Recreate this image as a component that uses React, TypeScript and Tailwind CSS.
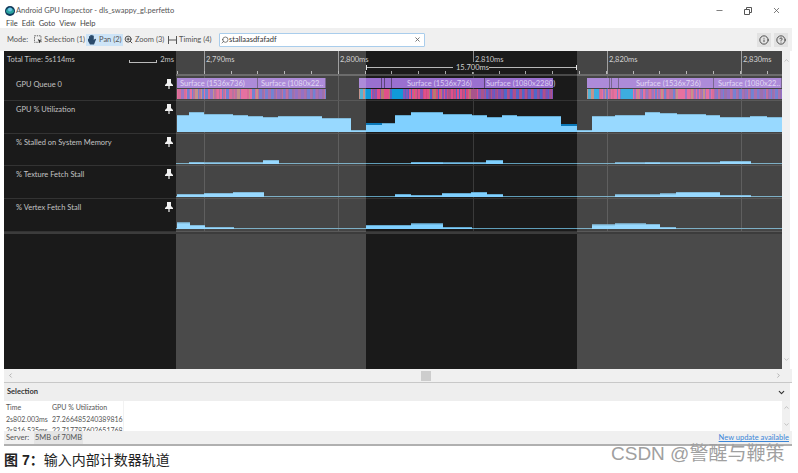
import React from 'react';
import { ChevronDown, ChevronLeft, ChevronRight, ChevronUp, CircleHelp, Info, Minus, Search, X, ZoomIn } from 'lucide-react';

const FONT = "font-['Lato','Open_Sans',sans-serif]";
const MAJOR = [204, 338, 473, 607, 741];
const LEFT = 176;
const WIDTH = 606;

type Step = [number, number, number, string?];

function Pin() {
  return (
    <svg width="8" height="10" viewBox="0 0 8 10" className="shrink-0">
      <path d="M2 0h4v4l2 2v1H4.6v3h-1.2V7H0V6l2-2z" fill="#f2f2f2" />
    </svg>
  );
}

function Shade({ top, h }: { top: number; h: number }) {
  return (
    <>
      <rect x={LEFT} y={top} width={190} height={h} fill="#fff" fillOpacity="0.19" />
      <rect x={577} y={top} width={205} height={h} fill="#fff" fillOpacity="0.19" />
    </>
  );
}

function Track({ label, top, h, children }: { label: string; top: number; h: number; children?: React.ReactNode }) {
  return (
    <div className="flex shrink-0" style={{ height: h }}>
      <div className="flex w-[172px] items-start justify-between border-b border-[#333] pl-3 pr-[3px] pt-[3px]">
        <span className="text-[7.5px] leading-[11px] text-[#c4c4c4]">{label}</span>
        <Pin />
      </div>
      <svg width={WIDTH} height={h} viewBox={`${LEFT} ${top} ${WIDTH} ${h}`} className="block">
        {MAJOR.map(x => (
          <line key={x} x1={x + 0.5} x2={x + 0.5} y1={top} y2={top + h} stroke="#3a3a3a" />
        ))}
        {children}
        <line x1={LEFT} x2={782} y1={top + h - 0.5} y2={top + h - 0.5} stroke="#333" />
        <Shade top={top} h={h} />
      </svg>
    </div>
  );
}

function Area({ steps, base, line }: { steps: Step[]; base: number; line?: boolean }) {
  return (
    <>
      {line && <line x1={LEFT} x2={782} y1={base - 0.5} y2={base - 0.5} stroke="#5f9db8" />}
      {steps.map(([a, b, y, cap], i) => (
        <g key={i}>
          <rect x={a} y={y} width={b - a} height={base - y} fill="#80d0ff" />
          <rect x={a} y={y} width={b - a} height={cap ? 2 : 1} fill={cap || '#64a9cf'} />
        </g>
      ))}
    </>
  );
}

// stripes are noise in the capture, a small seeded generator keeps them stable
function stripes(a: number, b: number, colors: string[], seed: number) {
  const out: { x: number; w: number; c: string }[] = [];
  let s = seed;
  let x = a;
  while (x < b) {
    s = (s * 1103 + 12345) % 65536;
    const w = Math.min(1 + (s % 2), b - x);
    out.push({ x, w, c: colors[(s >> 4) % colors.length] });
    x += w;
  }
  return out;
}

const PINK = ['#e0508a', '#e0508a', '#d04c80', '#8458b8', '#5068c8', '#a8548c', '#b87a70'];
const BLUE = ['#7c52b8', '#84509a', '#5068c8', '#98509a', '#5b63c8', '#b05088'];

function QueueGroup({ segs }: { segs: { a: number; b: number; label?: string; tx?: number }[] }) {
  return (
    <>
      {segs.map((s, i) => (
        <g key={i}>
          <rect x={s.a} y={78} width={s.b - s.a - 0.5} height={10} fill="#9a70d0" />
          {s.label && (
            <text x={s.tx ?? s.a + 3} y={86} fontSize="7.5" fill="#dcd0f0">
              {s.label}
            </text>
          )}
        </g>
      ))}
    </>
  );
}

function Queue() {
  const bands: [number, number, string[], number][] = [
    [177, 258, PINK, 7],
    [258, 326, BLUE, 21],
    [359, 365, ['#b87a70', '#2fa0c8'], 3],
    [371, 392, PINK, 33],
    [403, 485, PINK, 44],
    [485, 553, BLUE, 51],
    [587, 594, ['#b87a70', '#2fa0c8'], 5],
    [599, 621, PINK, 61],
    [633, 714, PINK, 73],
    [714, 782, BLUE, 87]
  ];
  return (
    <>
      <QueueGroup
        segs={[
          { a: 177, b: 258, label: 'Surface (1536x736)' },
          { a: 258, b: 326, label: 'Surface (1080x22..' },
          { a: 359, b: 382 },
          { a: 382, b: 385 },
          { a: 385, b: 392 },
          { a: 392, b: 485, label: 'Surface (1536x736)', tx: 407 },
          { a: 485, b: 553.5, label: 'Surface (1080x2280)', tx: 486 },
          { a: 587, b: 610 },
          { a: 610, b: 612 },
          { a: 612, b: 619 },
          { a: 619, b: 714, label: 'Surface (1536x736)', tx: 636 },
          { a: 714, b: 782, label: 'Surface (1080x22..', tx: 718 }
        ]}
      />
      {bands.map(([a, b, colors, seed]) =>
        stripes(a, b, colors, seed).map(s => <rect key={`${a}-${s.x}`} x={s.x} y={89} width={s.w} height={10} fill={s.c} />)
      )}
      <rect x={365} y={89} width={6} height={10} fill="#109ad8" />
      <rect x={392} y={89} width={11} height={10} fill="#109ad8" />
      <rect x={594} y={89} width={5} height={10} fill="#109ad8" />
      <rect x={621} y={89} width={12} height={10} fill="#109ad8" />
    </>
  );
}

const UTIL: Step[] = [
  [177, 189, 115], [189, 204, 112], [204, 233, 114], [233, 248, 115], [248, 263, 116], [263, 278, 117], [278, 322, 116], [322, 351, 118],
  [351, 366, 130], [366, 382, 123, '#0a78b8'], [382, 395, 123], [395, 411, 115], [411, 443, 112], [443, 472, 114], [472, 487, 115], [487, 502, 117],
  [502, 517, 115], [517, 561, 116], [561, 577, 124, '#0a78b8'], [577, 592, 130], [592, 615, 116], [615, 645, 115], [645, 660, 112], [660, 677, 113],
  [677, 706, 114], [706, 720, 115], [720, 750, 117], [750, 767, 116], [767, 782, 117]
];
const STALL: Step[] = [
  [189, 204, 162], [204, 263, 162.5], [263, 279, 160], [411, 443, 162], [443, 486, 162.5], [486, 503, 160], [615, 645, 162.5], [645, 660, 162], [660, 720, 162.5], [720, 751, 161]
];
const TEXTURE: Step[] = [
  [177, 204, 194], [204, 233, 193], [233, 264, 192], [395, 411, 194], [411, 442, 195], [442, 471, 193], [471, 487, 192], [487, 503, 194], [615, 660, 194.5], [660, 676, 193.5], [676, 720, 192], [720, 751, 195]
];
const VERTEX: Step[] = [
  [177, 190, 222.5], [190, 205, 225], [205, 234, 227], [366, 411, 225], [411, 443, 223.5], [443, 472, 227], [592, 615, 224.5], [615, 646, 223.5], [646, 660, 224], [660, 676, 227]
];

function Ruler() {
  const labels: [number, string][] = [[206, '2,790ms'], [340, '2,800ms'], [475, '2,810ms'], [609, '2,820ms'], [743, '2,830ms']];
  const minor: number[] = [];
  for (let x = 177; x < 782; x += 26.8) minor.push(Math.round(x));
  return (
    <svg width={WIDTH} height={25} viewBox={`${LEFT} 51 ${WIDTH} 25`} className="block">
      {MAJOR.map(x => (
        <line key={x} x1={x + 0.5} x2={x + 0.5} y1={51} y2={75} stroke="#8a8a8a" />
      ))}
      {minor.map(x => (
        <line key={x} x1={x + 0.5} x2={x + 0.5} y1={71} y2={75} stroke="#a8a8a8" />
      ))}
      {labels.map(([x, t]) => (
        <text key={t} x={x} y={62} fontSize="7.5" fill="#c8c8c8">
          {t}
        </text>
      ))}
      <rect x={LEFT} y={74} width={WIDTH} height={2} fill="#4a4a4a" />
      <Shade top={51} h={25} />
      <line x1={366} x2={576} y1={67.5} y2={67.5} stroke="#b8b8b8" />
      <line x1={366.5} x2={366.5} y1={65} y2={70} stroke="#e8e8e8" />
      <line x1={576.5} x2={576.5} y1={65} y2={70} stroke="#e8e8e8" />
      <rect x={453} y={62} width={36} height={10} fill="#1a1a1a" />
      <text x={456} y={70} fontSize="7.5" fill="#d0d0d0">
        15.700ms
      </text>
    </svg>
  );
}

function Timeline() {
  return (
    <div className="flex h-[318px] shrink-0">
      <div className="flex w-[778px] flex-col bg-[#1a1a1a]">
        <div className="flex h-[25px] shrink-0">
          <div className="flex w-[172px] items-start justify-between pl-[3px] pr-[2px] pt-[3px] text-[7.5px] leading-[11px] text-[#c4c4c4]">
            <span>Total Time: 5s114ms</span>
            <span className="flex items-center gap-[3px]">
              <span className="mt-[3px] h-[3px] w-[28px] border-x border-b border-[#bbb]" />
              2ms
            </span>
          </div>
          <Ruler />
        </div>
        <Track label="GPU Queue 0" top={76} h={25}>
          <Queue />
        </Track>
        <Track label="GPU % Utilization" top={101} h={33}>
          <Area steps={UTIL} base={132} />
        </Track>
        <Track label="% Stalled on System Memory" top={134} h={32}>
          <Area steps={STALL} base={164} line />
        </Track>
        <Track label="% Texture Fetch Stall" top={166} h={33}>
          <Area steps={TEXTURE} base={197} line />
        </Track>
        <Track label="% Vertex Fetch Stall" top={199} h={33}>
          <Area steps={VERTEX} base={229} line />
        </Track>
        <div className="flex min-h-0 flex-1 border-t-2 border-[#3c3c3c]">
          <div className="w-[172px]" />
          <div className="w-[190px] bg-[#4a4a4a]" />
          <div className="w-[211px]" />
          <div className="flex-1 bg-[#4a4a4a]" />
        </div>
      </div>
      <div className="flex w-2 flex-col items-center justify-between bg-[#f0f0f0] py-[6px] text-[#a0a0a0]">
        <ChevronUp size={7} />
        <ChevronDown size={7} />
      </div>
    </div>
  );
}

function ModeButton({ icon, label, active, w }: { icon: React.ReactNode; label: string; active?: boolean; w: string }) {
  return (
    <div className={`flex h-[12px] shrink-0 items-center gap-[2px] px-[1px] ${w} ${active ? 'bg-[#cde4f7]' : ''}`}>
      {icon}
      <span>{label}</span>
    </div>
  );
}

export default function App() {
  return (
    <div className={`${FONT} relative h-[473px] w-[798px] overflow-hidden whitespace-nowrap bg-white`}>
      <div className="flex h-[19px] items-center pl-[5px] pr-[17px] pt-[2px] text-[7.5px] text-[#555]">
        <svg width="10" height="10" viewBox="0 0 10 10" className="mr-[1px]">
          <circle cx="5" cy="5" r="5" fill="#10385a" />
          <path d="M1 6a4 4 0 0 1 8 0 5 5 0 0 1-8 0z" fill="#2aa3a0" />
          <circle cx="5" cy="3.5" r="2" fill="#6ec6e8" />
        </svg>
        <span>Android GPU Inspector - dls_swappy_gl.perfetto</span>
        <div className="ml-auto flex items-center gap-[20px] text-[#555]">
          <Minus size={9} />
          <svg width="8" height="8" viewBox="0 0 8 8" fill="none" stroke="#555">
            <path d="M2.5 2V.5h5v5H6M.5 2.5h5v5h-5z" />
          </svg>
          <X size={9} />
        </div>
      </div>
      <div className="flex h-[9px] items-center gap-[4px] pl-[6px] text-[7.5px] text-[#444]">
        <span>File</span>
        <span>Edit</span>
        <span>Goto</span>
        <span>View</span>
        <span>Help</span>
      </div>

      <div className="mr-[6px] flex h-[23px] items-center bg-[#f0f0f0] pl-[7px] pr-[4px] text-[7.5px] text-[#555]">
        <span className="w-[26px]">Mode:</span>
        <ModeButton
          w="w-[53px]"
          label="Selection (1)"
          icon={
            <svg width="9" height="9" viewBox="0 0 9 9" fill="none">
              <rect x=".5" y=".5" width="7" height="7" stroke="#555" strokeDasharray="1.5 1" />
              <path d="M4 4l4.5 2-2 .6L6 8.6z" fill="#333" />
            </svg>
          }
        />
        <ModeButton
          w="w-[37px]"
          active
          label="Pan (2)"
          icon={
            <svg width="10" height="11" viewBox="0 0 10 11">
              <path d="M2 5V2.5a.6.6 0 0 1 1.2 0V1.5a.6.6 0 0 1 1.2 0v-.2a.6.6 0 0 1 1.2 0v.7a.6.6 0 0 1 1.2 0v4l1-1a.7.7 0 0 1 1 1L7 10.5H3L1 7V5a.5.5 0 0 1 1 0z" fill="#2a4a6a" />
            </svg>
          }
        />
        <ModeButton w="w-[44px]" label="Zoom (3)" icon={<ZoomIn size={9} strokeWidth={2.5} className="text-[#444]" />} />
        <ModeButton
          w="w-[46px]"
          label="Timing (4)"
          icon={
            <svg width="9" height="8" viewBox="0 0 9 8" stroke="#555" fill="none">
              <path d="M.5 0v8M8.5 0v8M.5 4h8" />
            </svg>
          }
        />
        <div className="ml-[6px] flex h-[14px] w-[206px] items-center rounded-[1px] border border-[#a9cdec] bg-white pl-[1px] pr-[2px] text-[#333]">
          <Search size={8} className="-scale-x-100 text-[#444]" />
          <span>stallaasdfafadf</span>
          <X size={7} strokeWidth={3} className="ml-auto mr-[1px] text-[#666]" />
        </div>
        <div className="ml-auto flex items-center gap-[3px]">
          <span className="flex h-[14px] w-[14px] items-center justify-center bg-[#e2e2e2] text-[#333]">
            <Info size={10} />
          </span>
          <span className="flex h-[14px] w-[14px] items-center justify-center bg-[#e2e2e2] text-[#333]">
            <CircleHelp size={10} />
          </span>
        </div>
      </div>

      <div className="ml-1 mr-[8px]">
        <Timeline />
        <div className="mr-[-2px] flex h-[14px] items-center justify-between border-b border-[#c8c8c8] bg-[#f0f0f0] pl-[3px] pr-[10px] text-[#888]">
          <ChevronLeft size={7} />
          <span className="ml-[63px] h-[10px] w-[10px] bg-[#cdcdcd]" />
          <ChevronRight size={7} />
        </div>
        <div className="flex h-[18px] items-center justify-between bg-[#eeeeee] pl-[3px] pr-[4px] text-[7.5px] font-bold text-[#333]">
          <span>Selection</span>
          <ChevronDown size={9} strokeWidth={3} />
        </div>
        <div className="flex h-[30px] overflow-hidden bg-white text-[7px] leading-[11.5px] text-[#555]">
          <div className="w-[119px] shrink-0 overflow-hidden pl-[2px] pt-[1px]">
            <div className="flex"><span className="w-[46px] shrink-0">Time</span><span>GPU % Utilization</span></div>
            <div className="flex"><span className="w-[46px] shrink-0">2s802.003ms</span><span>27.266485240389816</span></div>
            <div className="flex"><span className="w-[46px] shrink-0">2s816.535ms</span><span>22.717787602651768</span></div>
          </div>
          <div className="flex-1 border-l border-[#f2f2f2]" />
          <div className="flex w-2 flex-col items-center justify-between bg-[#f0f0f0] py-[3px] text-[#a0a0a0]">
            <ChevronUp size={7} />
            <ChevronDown size={7} />
          </div>
        </div>
        <div className="mr-[-2px] flex h-[15px] items-center border-b-2 border-[#b0b0b0] bg-[#f0f0f0] pl-[2px] pr-[3px] text-[7.5px] text-[#555]">
          <span className="w-[28px]">Server:</span>
          <span className="flex h-full w-[49px] items-center justify-center bg-[#e4e4e4]">5MB of 70MB</span>
          <span className="ml-auto text-[#3b86d8] underline">New update available</span>
        </div>
      </div>

      <div className="flex h-[28px] items-center pl-[4px] font-['Liberation_Sans','Noto_Sans_CJK_SC',sans-serif] text-[14px] text-[#222]">
        <span className="font-bold">图 7：</span>
        <span>输入内部计数器轨道</span>
      </div>
      <div className="absolute left-[611px] top-[443px] font-['Liberation_Sans','Noto_Sans_CJK_SC',sans-serif] text-[19px] leading-[22px] text-[#a0a0a0]">
        CSDN @警醒与鞭策
      </div>
    </div>
  );
}
